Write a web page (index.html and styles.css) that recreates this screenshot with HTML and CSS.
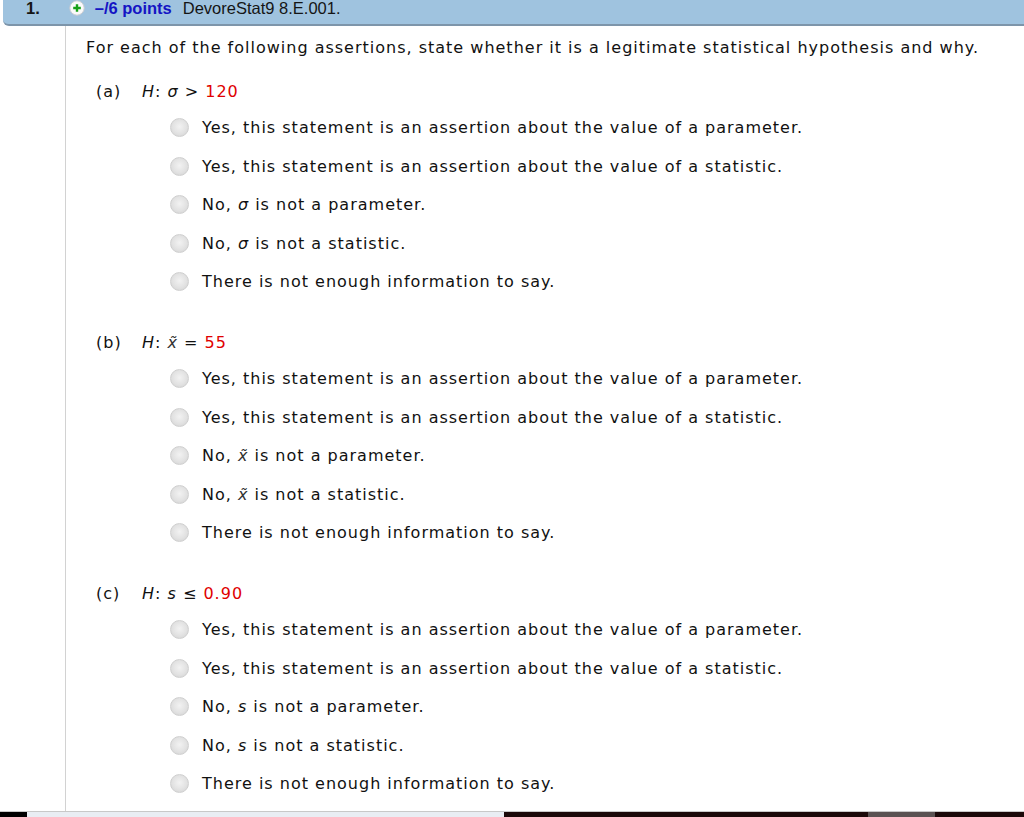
FILE: index.html
```html
<!DOCTYPE html>
<html>
<head>
<meta charset="utf-8">
<link rel="stylesheet" href="styles.css">
</head>
<body>
<div class="page">
  <div class="qhead">
    <span class="qnum">1.</span>
    <span class="plus"><svg width="16" height="16" viewBox="0 0 16 16"><circle cx="8" cy="8" r="7.2" fill="#fafafa" stroke="#c9ccd2" stroke-width="1"/><path d="M8 4.2v7.6M4.2 8h7.6" stroke="#18a018" stroke-width="2.4" stroke-linecap="butt"/></svg></span>
    <span class="pts">–/6 points</span>
    <span class="qid">DevoreStat9 8.E.001.</span>
  </div>
  <div class="content">
    <p class="prompt">For each of the following assertions, state whether it is a legitimate statistical hypothesis and why.</p>

    <div class="part">
      <div class="phead"><span class="plabel">(a)</span><span class="hyp"><i>H</i>: <i>σ</i> &gt; <span class="val">120</span></span></div>
      <div class="opt"><span class="radio"></span><span>Yes, this statement is an assertion about the value of a parameter.</span></div>
      <div class="opt"><span class="radio"></span><span>Yes, this statement is an assertion about the value of a statistic.</span></div>
      <div class="opt"><span class="radio"></span><span>No, <i>σ</i> is not a parameter.</span></div>
      <div class="opt"><span class="radio"></span><span>No, <i>σ</i> is not a statistic.</span></div>
      <div class="opt"><span class="radio"></span><span>There is not enough information to say.</span></div>
    </div>

    <div class="part">
      <div class="phead"><span class="plabel">(b)</span><span class="hyp"><i>H</i>: <i class="xt">x̃</i> = <span class="val">55</span></span></div>
      <div class="opt"><span class="radio"></span><span>Yes, this statement is an assertion about the value of a parameter.</span></div>
      <div class="opt"><span class="radio"></span><span>Yes, this statement is an assertion about the value of a statistic.</span></div>
      <div class="opt"><span class="radio"></span><span>No, <i class="xt">x̃</i> is not a parameter.</span></div>
      <div class="opt"><span class="radio"></span><span>No, <i class="xt">x̃</i> is not a statistic.</span></div>
      <div class="opt"><span class="radio"></span><span>There is not enough information to say.</span></div>
    </div>

    <div class="part">
      <div class="phead"><span class="plabel">(c)</span><span class="hyp"><i>H</i>: <i>s</i> ≤ <span class="val">0.90</span></span></div>
      <div class="opt"><span class="radio"></span><span>Yes, this statement is an assertion about the value of a parameter.</span></div>
      <div class="opt"><span class="radio"></span><span>Yes, this statement is an assertion about the value of a statistic.</span></div>
      <div class="opt"><span class="radio"></span><span>No, <i>s</i> is not a parameter.</span></div>
      <div class="opt"><span class="radio"></span><span>No, <i>s</i> is not a statistic.</span></div>
      <div class="opt"><span class="radio"></span><span>There is not enough information to say.</span></div>
    </div>
  </div>
  <div class="taskbar">
    <span class="tb-black"></span>
    <span class="tb-light"></span>
    <span class="tb-dark"></span>
    <span class="tb-grey"></span>
    <span class="tb-rest"></span>
  </div>
</div>
</body>
</html>
```

FILE: styles.css
```css
html, body {
  margin: 0;
  padding: 0;
  background: #ffffff;
}
.page {
  width: 1024px;
  height: 817px;
  display: flex;
  flex-direction: column;
  overflow: hidden;
}
.qhead {
  flex: 0 0 auto;
  margin-left: 3px;
  height: 24px;
  border-bottom: 2px solid #7d95aa;
  border-bottom-left-radius: 6px;
  background: #9fc3df;
  display: flex;
  align-items: flex-start;
  font-family: "Liberation Sans", Arial, sans-serif;
  font-size: 16.5px;
  line-height: 16px;
  color: #151515;
  overflow: hidden;
}
.qnum {
  font-weight: bold;
  margin-left: 23px;
}
.plus {
  margin-left: 29px;
  display: flex;
}
.pts {
  font-weight: bold;
  color: #1414c4;
  margin-left: 10px;
}
.qid {
  margin-left: 11px;
}
.content {
  flex: 1 1 auto;
  min-height: 0;
  overflow: hidden;
  margin-left: 65px;
  border-left: 1px solid #d2d2d2;
  padding-left: 20px;
  padding-top: 12px;
  font-family: "DejaVu Sans", Verdana, sans-serif;
  font-size: 16px;
  letter-spacing: 1px;
  color: #111;
}
.prompt {
  margin: 0 0 17px 0;
  height: 20px;
  line-height: 20px;
  white-space: nowrap;
}
.part {
  margin-bottom: 25px;
}
.phead {
  height: 33.5px;
  line-height: 33.5px;
  padding-left: 10px;
  display: flex;
}
.plabel {
  width: 46px;
}
.val {
  color: #e00000;
}
.opt {
  height: 38.5px;
  display: flex;
  align-items: center;
  padding-left: 84px;
}
.radio {
  width: 17px;
  height: 17px;
  border-radius: 50%;
  border: 1px solid #cfcfcf;
  background: radial-gradient(circle at 50% 45%, #f2f2f2 0%, #e2e2e2 55%, #d0d0d0 100%);
  margin-right: 13px;
  flex: 0 0 auto;
}
.xt {
  color: #333;
}
.taskbar {
  flex: 0 0 5px;
  display: flex;
  border-top: 1px solid #c8c8c8;
}
.tb-black { width: 27px; background: #000; }
.tb-light { width: 477px; background: #e9edf3; }
.tb-dark { width: 364px; background: #1b0909; }
.tb-grey { width: 67px; background: #5a5252; }
.tb-rest { flex: 1; background: #1b0909; }
```
